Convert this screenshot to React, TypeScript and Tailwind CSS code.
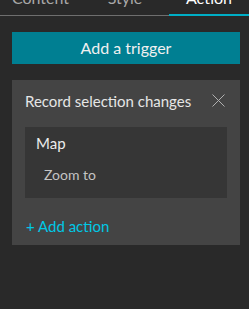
import React from "react";

export default function App() {
  const font = { fontFamily: "Lato, 'Open Sans', sans-serif" };
  return (
    <div className="w-[249px] h-[309px] bg-[#292929] overflow-hidden" style={font}>
      <div className="flex h-[16px] overflow-hidden">
        <div className="w-[81px] h-full border-b border-[#6e6e6e] flex justify-center">
          <span className="text-[16px] leading-[20px] mt-[-12px] text-[#a8a8a8]">Content</span>
        </div>
        <div className="w-[88px] h-full border-b border-[#6e6e6e] flex justify-center">
          <span className="text-[16px] leading-[20px] mt-[-12px] text-[#a8a8a8]">Style</span>
        </div>
        <div className="flex-1 h-full border-b-2 border-[#00aec6] flex justify-center">
          <span className="text-[16px] leading-[20px] mt-[-12px] text-white">Action</span>
        </div>
      </div>
      <div className="pl-3 pr-[9px]">
        <button className="mt-4 w-full h-8 bg-[#007f92] text-[#f0f0f0] text-[16px] leading-[20px] flex items-center justify-center">
          Add a trigger
        </button>
        <div className="mt-4 bg-[#444444]">
          <div className="h-[41px] flex items-center justify-between pl-[13px] pr-[15px]">
            <span className="text-[15px] leading-[20px] text-[#e6e6e6]">Record selection changes</span>
            <svg width="13" height="13" viewBox="0 0 13 13" className="text-[#b0b0b0]">
              <path d="M0.5 0.5 L12.5 12.5 M12.5 0.5 L0.5 12.5" stroke="currentColor" strokeWidth="1" fill="none" />
            </svg>
          </div>
          <div className="mt-[6px] mx-[13px] bg-[#363636] pt-[6px] pb-[13px] pl-[11px]">
            <div className="text-[15px] leading-[20px] text-[#ececec]">Map</div>
            <div className="mt-[12px] pl-[8px] text-[14px] leading-[20px] text-[#c4c4c4]">Zoom to</div>
          </div>
          <div className="pt-[18px] pb-[9px] pl-[14px] text-[15px] leading-[20px] text-[#00c8e6]">
            + Add action
          </div>
        </div>
      </div>
    </div>
  );
}
